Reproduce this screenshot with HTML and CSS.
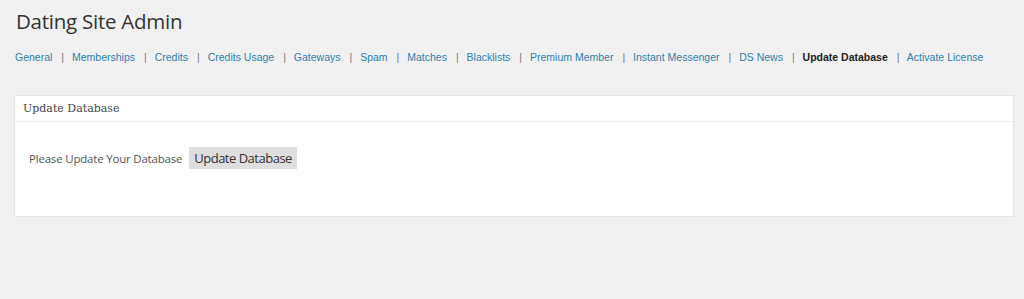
FILE: index.html
```html
<!DOCTYPE html>
<html>
<head>
<meta charset="utf-8">
<link rel="stylesheet" href="styles.css">
</head>
<body>
<div class="wrap">
  <h2 class="title">Dating Site Admin</h2>
  <nav class="subnav">
    <a href="#">General</a><span class="sep">|</span>
    <a href="#">Memberships</a><span class="sep">|</span>
    <a href="#">Credits</a><span class="sep">|</span>
    <a href="#">Credits Usage</a><span class="sep">|</span>
    <a href="#">Gateways</a><span class="sep">|</span>
    <a href="#">Spam</a><span class="sep">|</span>
    <a href="#">Matches</a><span class="sep">|</span>
    <a href="#">Blacklists</a><span class="sep">|</span>
    <a href="#">Premium Member</a><span class="sep">|</span>
    <a href="#">Instant Messenger</a><span class="sep">|</span>
    <a href="#">DS News</a><span class="sep">|</span>
    <a href="#" class="current">Update Database</a><span class="sep">|</span>
    <a href="#">Activate License</a>
  </nav>
  <div class="postbox">
    <h3 class="postbox-title">Update Database</h3>
    <div class="postbox-inside">
      <span class="label">Please Update Your Database</span>
      <button class="btn" type="button">Update Database</button>
    </div>
  </div>
</div>
</body>
</html>
```
FILE: styles.css
```css
html, body {
  margin: 0;
  padding: 0;
  background: #f1f1f1;
}
body {
  font-family: "Open Sans", sans-serif;
  color: #444;
}
.wrap {
  padding: 0 10px 0 14px;
}
.title {
  margin: 0;
  padding: 7px 0 0 2px;
  font-family: "Open Sans", sans-serif;
  font-weight: 400;
  font-size: 20.5px;
  letter-spacing: -0.25px;
  line-height: 29px;
  color: #333;
}
.subnav {
  margin-top: 14px;
  padding-left: 1px;
  font-family: "Liberation Sans", Arial, sans-serif;
  font-size: 10.5px;
  line-height: 14px;
  white-space: nowrap;
}
.subnav a {
  color: #2e7fad;
  text-decoration: none;
}
.subnav a.current {
  color: #222;
  font-weight: bold;
}
.sep {
  color: #777;
  margin: 0 5px 0 9px;
}
.postbox {
  margin-top: 31px;
  background: #fff;
  border: 1px solid #e5e5e5;
  box-shadow: 0 1px 1px rgba(0,0,0,0.04);
  height: 122px;
  box-sizing: border-box;
}
.postbox-title {
  margin: 0;
  padding: 0 8px;
  height: 25px;
  line-height: 25px;
  border-bottom: 1px solid #eee;
  font-family: "DejaVu Serif", "Liberation Serif", serif;
  font-weight: 400;
  font-size: 11px;
  color: #464646;
}
.postbox-inside {
  display: flex;
  align-items: center;
  padding: 25px 14px 0;
}
.label {
  font-size: 11.5px;
  letter-spacing: -0.2px;
  color: #555;
}
.btn {
  margin-left: 7px;
  border: none;
  background: #dedede;
  color: #333;
  font-family: "Open Sans", sans-serif;
  font-size: 13px;
  letter-spacing: -0.5px;
  height: 22px;
  padding: 0 5px;
  line-height: 22px;
}
```
